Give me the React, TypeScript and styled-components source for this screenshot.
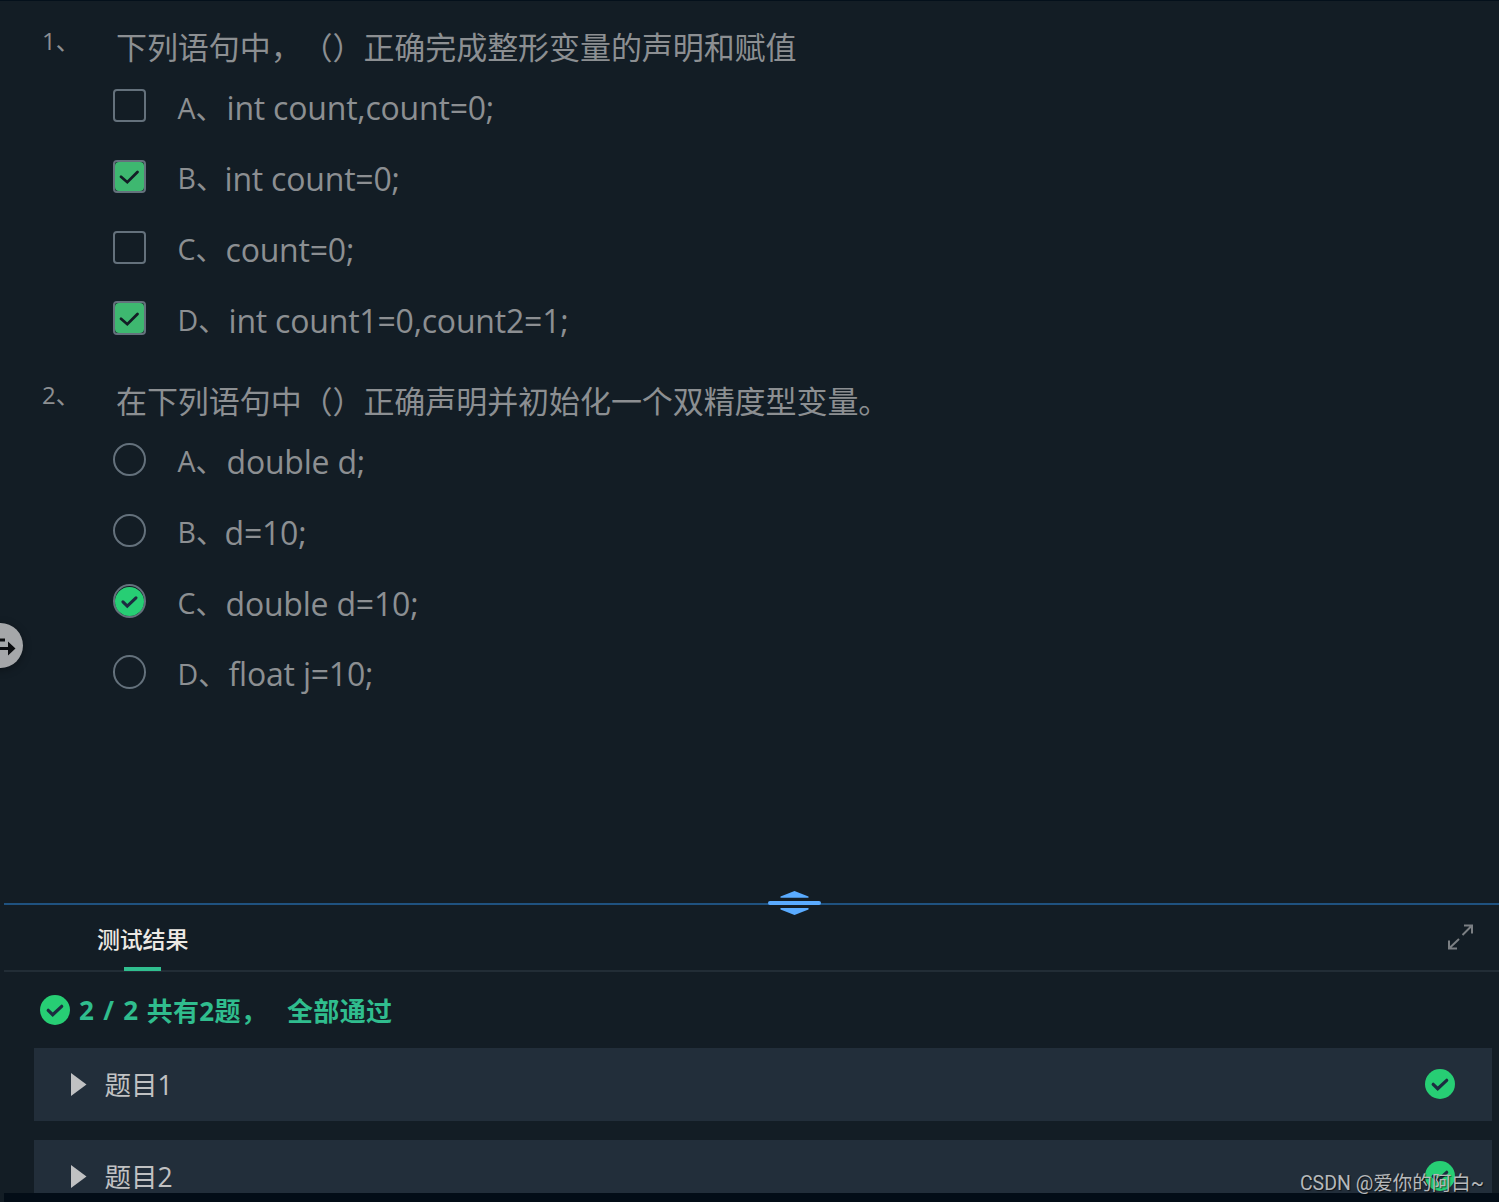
import React from 'react'
import styled, { createGlobalStyle, css } from 'styled-components'

type Kind = 'checkbox' | 'radio'

interface Choice {
  letter: string
  text: string
  checked?: boolean
}

interface QuestionData {
  no: number
  kind: Kind
  title: string
  choices: Choice[]
}

const QUESTIONS: QuestionData[] = [
  {
    no: 1,
    kind: 'checkbox',
    title: '下列语句中，（）正确完成整形变量的声明和赋值',
    choices: [
      { letter: 'A', text: 'int count,count=0;' },
      { letter: 'B', text: 'int count=0;', checked: true },
      { letter: 'C', text: 'count=0;' },
      { letter: 'D', text: 'int count1=0,count2=1;', checked: true },
    ],
  },
  {
    no: 2,
    kind: 'radio',
    title: '在下列语句中（）正确声明并初始化一个双精度型变量。',
    choices: [
      { letter: 'A', text: 'double d;' },
      { letter: 'B', text: 'd=10;' },
      { letter: 'C', text: 'double d=10;', checked: true },
      { letter: 'D', text: 'float j=10;' },
    ],
  },
]

const RESULTS = ['题目1', '题目2']

const GlobalStyle = createGlobalStyle`
  body {
    margin: 0;
    background: #131d25;
    font-family: 'Open Sans', 'Noto Sans CJK SC', sans-serif;
    text-spacing-trim: space-all;
  }
`

const Page = styled.main`
  position: relative;
  display: flex;
  flex-direction: column;
  width: 100%;
  height: 1202px;
  box-sizing: border-box;
  border-top: 1px solid #04101b;
  overflow: hidden;
`

const QuestionArea = styled.section`
  height: 902px;
  flex: none;
`

const Question = styled.article`
  display: grid;
  grid-template-columns: 113px 1fr;
  height: 353.8px;
`

const QuestionNo = styled.div`
  padding: 24px 0 0 42px;
  font-size: 24px;
  line-height: 32px;
  color: #8c8f92;
`

const QuestionTitle = styled.h2`
  margin: 0;
  height: 69.3px;
  padding: 22px 0 0 3px;
  box-sizing: border-box;
  font: 400 31px/46px 'Noto Sans CJK SC', sans-serif;
  letter-spacing: -0.07px;
  white-space: nowrap;
  color: #8c8f92;
`

const ChoiceRow = styled.label`
  display: flex;
  align-items: center;
  height: 70.8px;
`

const Mark = styled.span<{ $kind: Kind }>`
  display: flex;
  flex: none;
  align-items: center;
  justify-content: center;
  width: 33px;
  height: 33.5px;
  box-sizing: border-box;
  border: 2px solid #64717c;
  border-radius: ${({ $kind }) => ($kind === 'radio' ? '50%' : '4px')};
`

const Tick = styled.span`
  display: flex;
  align-items: center;
  justify-content: center;
  width: 100%;
  height: 100%;
  border-radius: 4px;
  background: #3eb870;
`

const Letter = styled.span<{ $width: number }>`
  width: ${({ $width }) => $width}px;
  margin-left: 31.5px;
  padding-top: 4px;
  font-size: 28.5px;
  line-height: 44px;
  white-space: nowrap;
  color: #8c8f92;
`

const ChoiceText = styled.span`
  padding-top: 5px;
  font-size: 32px;
  line-height: 44px;
  letter-spacing: -0.2px;
  white-space: nowrap;
  color: #8c8f92;
`

const Splitter = styled.div`
  position: relative;
  flex: none;
  height: 2px;
  margin-left: 4px;
  background: #1f5280;
`

const SplitterGrip = styled.svg`
  position: absolute;
  left: 764px;
  top: -13px;
`

const TabBar = styled.header`
  display: flex;
  flex: none;
  justify-content: space-between;
  height: 67px;
  box-sizing: border-box;
  margin-left: 4px;
  padding: 0 25px 0 93px;
  border-bottom: 2px solid #222d36;
`

const Tab = styled.div`
  display: flex;
  flex-direction: column;
  align-items: center;
  justify-content: space-between;
  padding-top: 16px;
  font: 500 23px/34px 'Noto Sans CJK SC', sans-serif;
  letter-spacing: -0.2px;
  color: #ece9e4;

  &::after {
    content: '';
    width: 37px;
    height: 4px;
    margin-bottom: -1px;
    background: #30bf8f;
  }
`

const ExpandIcon = styled.svg`
  margin-top: 19px;
`

const Summary = styled.div`
  display: flex;
  flex: none;
  align-items: center;
  height: 76px;
  padding-left: 40px;
  font-size: 26px;
  font-weight: 700;
  white-space: pre;
  color: #30bd8e;
`

const Score = styled.span`
  margin: 0 8px 0 9px;
  letter-spacing: 0.5px;
  word-spacing: 1.6px;
`

const SummaryText = styled.span<{ $gap?: number }>`
  margin-left: ${({ $gap = 0 }) => $gap}px;
  letter-spacing: 0.3px;
`

const ResultList = styled.div`
  display: flex;
  flex: none;
  flex-direction: column;
  gap: 19px;
  height: 145px;
  overflow: hidden;
  margin: 0 7px 0 34px;
`

const ResultRow = styled.div`
  display: flex;
  flex: none;
  align-items: center;
  height: 73px;
  box-sizing: border-box;
  padding: 0 37px 1px;
  background: #222e3a;
`

const ResultName = styled.span`
  flex: 1;
  margin-left: 17.5px;
  padding-top: 2px;
  font-size: 26.5px;
  line-height: 34px;
  color: #c0c1c2;
`

const BottomBar = styled.footer`
  flex: none;
  height: 9px;
  margin-left: 4px;
  background: #030d17;
`

const floating = css`
  position: absolute;
  z-index: 2;
`

const SideHandle = styled.button`
  ${floating}
  left: -22px;
  top: 622px;
  width: 45px;
  height: 45px;
  padding: 0;
  border: none;
  border-radius: 50%;
  background: #a5a7a9;
  box-shadow: 0 2px 8px rgba(0, 0, 0, 0.35);

  svg {
    display: block;
  }
`

const Watermark = styled.div`
  ${floating}
  right: 15px;
  bottom: 3px;
  font: 400 19.5px/30px Roboto, 'Noto Sans CJK SC', sans-serif;
  white-space: nowrap;
  color: #b6b9bb;
  text-shadow: 1px 1px 1px rgba(0, 0, 0, 0.6);
`

const PassIcon: React.FC<{ size?: number }> = ({ size = 30 }) => (
  <svg width={size} height={size} viewBox="0 0 30 30">
    <circle cx="15" cy="15" r="15" fill="#27ce74" />
    <path d="M8.2 15.3l4.5 4.4 9-8.4" fill="none" stroke="#1c2c40" strokeWidth="3.2" strokeLinecap="round" />
  </svg>
)

const BoxTick = () => (
  <Tick>
    <svg width="29" height="29" viewBox="0 0 29 29">
      <path d="M6 14.8l6.3 5.4 10.2-10.2" fill="none" stroke="#131d25" strokeWidth="2.8" strokeLinecap="round" />
    </svg>
  </Tick>
)

const LETTER_WIDTH: Record<string, number> = { A: 49, B: 47, C: 48, D: 51 }

const App: React.FC = () => (
  <>
    <GlobalStyle />
    <Page>
      <QuestionArea>
        {QUESTIONS.map(({ no, kind, title, choices }) => (
          <Question key={no}>
            <QuestionNo>{no}、</QuestionNo>
            <div>
              <QuestionTitle>{title}</QuestionTitle>
              {choices.map(({ letter, text, checked }) => (
                <ChoiceRow key={letter}>
                  <Mark $kind={kind}>
                    {checked && (kind === 'radio' ? <PassIcon size={29} /> : <BoxTick />)}
                  </Mark>
                  <Letter $width={LETTER_WIDTH[letter]}>{letter}、</Letter>
                  <ChoiceText>{text}</ChoiceText>
                </ChoiceRow>
              ))}
            </div>
          </Question>
        ))}
      </QuestionArea>

      <Splitter>
        <SplitterGrip width="53" height="26" viewBox="0 0 53 26" fill="#5aabff">
          <path d="M12.5 7.8v-1.3L26.5 1l14 5.5v1.3z" />
          <rect x="0" y="11" width="53" height="4" rx="2" />
          <path d="M12.5 18v1.5l14 5.5 14-5.5V18z" />
        </SplitterGrip>
      </Splitter>

      <TabBar>
        <Tab>测试结果</Tab>
        <ExpandIcon width="27" height="27" viewBox="0 0 27 27" fill="none" stroke="#7b7f83" strokeWidth="2">
          <path d="M15.5 11L25 1.5M17 1.5h8v8" />
          <path d="M12 15L2 24.5M2 16.5v8h8" />
        </ExpandIcon>
      </TabBar>

      <Summary>
        <PassIcon />
        <Score>2 / 2</Score>
        <SummaryText>共有2题，</SummaryText>
        <SummaryText $gap={20}>全部通过</SummaryText>
      </Summary>

      <ResultList>
        {RESULTS.map(name => (
          <ResultRow key={name}>
            <svg width="16" height="23" viewBox="0 0 16 23">
              <path d="M0 0l15.5 11.5L0 23z" fill="#c0c1c2" />
            </svg>
            <ResultName>{name}</ResultName>
            <PassIcon />
          </ResultRow>
        ))}
      </ResultList>
      <BottomBar />

      <SideHandle aria-label="展开">
        <svg width="45" height="45" viewBox="0 0 45 45">
          <path d="M10 15.5h17v3H10zM10 24h20v-5.5l7.5 7-7.5 7V27H10z" fill="#0a0c0e" />
        </svg>
      </SideHandle>
      <Watermark>CSDN @爱你的阿白~</Watermark>
    </Page>
  </>
)

export default App
